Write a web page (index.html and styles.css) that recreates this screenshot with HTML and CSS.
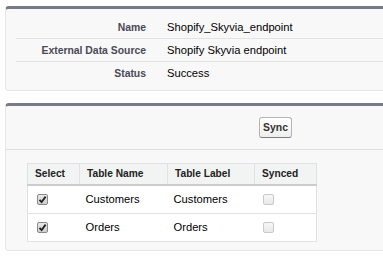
FILE: index.html
```html
<!DOCTYPE html>
<html lang="en">
<head>
  <meta charset="UTF-8" />
  <title>External Data Source Sync</title>
  <link rel="stylesheet" href="styles.css">
</head>
<body>
  <!-- Details block -->
  <div class="block detail">
    <div class="detail-row">
      <span class="label">Name</span>
      <span class="value">Shopify_Skyvia_endpoint</span>
    </div>
    <div class="detail-row">
      <span class="label">External Data Source</span>
      <span class="value">Shopify Skyvia endpoint</span>
    </div>
    <div class="detail-row last">
      <span class="label">Status</span>
      <span class="value">Success</span>
    </div>
  </div>

  <!-- Sync block -->
  <div class="block sync">
    <div class="buttons">
      <button class="btn" type="button">Sync</button>
    </div>
    <div class="table-wrap">
      <table class="list">
        <thead>
          <tr>
            <th class="col-select">Select</th>
            <th class="col-name">Table Name</th>
            <th class="col-label">Table Label</th>
            <th class="col-synced">Synced</th>
          </tr>
        </thead>
        <tbody>
          <tr>
            <td><span class="check checked"><svg viewBox="0 0 11 11" width="11" height="11"><path d="M2.5 5.8 L4.6 8 L8.6 2.6" fill="none" stroke="#222" stroke-width="1.8"/></svg></span></td>
            <td>Customers</td>
            <td>Customers</td>
            <td class="synced"><span class="check off"></span></td>
          </tr>
          <tr>
            <td><span class="check checked"><svg viewBox="0 0 11 11" width="11" height="11"><path d="M2.5 5.8 L4.6 8 L8.6 2.6" fill="none" stroke="#222" stroke-width="1.8"/></svg></span></td>
            <td>Orders</td>
            <td>Orders</td>
            <td class="synced"><span class="check off"></span></td>
          </tr>
        </tbody>
      </table>
    </div>
  </div>
</body>
</html>
```
FILE: styles.css
```css
body {
  margin: 0;
  padding: 6px 0 0 5px;
  background-color: #fff;
  font-family: "Liberation Sans", Arial, sans-serif;
  color: #000;
}

.block {
  background-color: #f8f8f8;
  border: 1px solid #e6e6e6;
  border-right: none;
  border-top: 3px solid #767a89;
  border-radius: 4px 0 0 4px;
}

/* detail list */
.detail {
  padding: 7px 0 6px 0;
}

.detail-row {
  display: flex;
  align-items: center;
  height: 22px;
  margin-left: 10px;
  border-bottom: 1px solid #e3e3e3;
}

.detail-row.last {
  border-bottom: none;
}

.label {
  width: 130px;
  text-align: right;
  font-size: 10.4px;
  font-weight: bold;
  color: #4a4a56;
}

.value {
  margin-left: 21px;
  font-size: 11.2px;
}

/* sync block */
.sync {
  margin-top: 12px;
  padding-bottom: 8px;
}

.buttons {
  display: flex;
  padding: 11px 0 11px 253px;
  border-bottom: 1px solid #e0e0e0;
}

.btn {
  height: 21px;
  width: 33px;
  padding: 0;
  font-family: "Liberation Sans", Arial, sans-serif;
  font-size: 10.4px;
  font-weight: bold;
  color: #333;
  background: linear-gradient(#ffffff, #efefef);
  border: 1px solid #b5b5b5;
  border-bottom-color: #7f7f7f;
  border-radius: 3px;
  cursor: pointer;
}

.table-wrap {
  padding: 13px 0 0 21px;
}

.list {
  border-collapse: collapse;
  table-layout: fixed;
  width: 289px;
  background-color: #fff;
  border: 1px solid #e0e3e5;
  font-size: 11.2px;
}

.list th {
  box-sizing: border-box;
  height: 21px;
  padding: 0 6px 0 7px;
  text-align: left;
  font-size: 10.2px;
  font-weight: bold;
  color: #222;
  background-color: #f2f3f3;
  border-right: 1px solid #e0e3e5;
  border-bottom: 2px solid #cccccc;
}

.col-select { width: 52px; }
.col-name { width: 88px; }
.col-label { width: 87px; }
.col-synced { width: 62px; }

.list td {
  height: 27px;
  padding: 0 6px;
  border-bottom: 1px solid #e3e3e3;
}

.list td.synced {
  padding-left: 5px;
}

.check {
  display: block;
  width: 11px;
  height: 11px;
  margin-left: 3px;
  border-radius: 2px;
  box-sizing: border-box;
}

.check svg {
  display: block;
  margin: -1px;
}

.check.checked {
  background: linear-gradient(#e9e9e9, #cfcfcf);
  border: 1px solid #8a8a8a;
}

.check.off {
  background: linear-gradient(#f6f6f6, #e9e9e9);
  border: 1px solid #c9c9c9;
}
```
